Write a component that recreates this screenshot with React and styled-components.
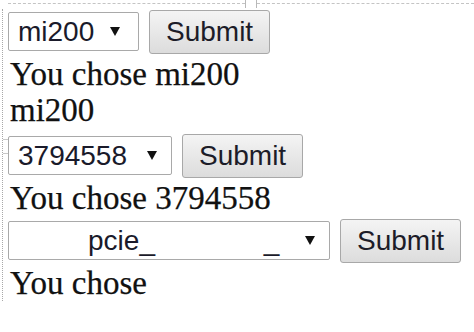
import { useState } from "react";
import styled, { createGlobalStyle } from "styled-components";

const GlobalStyle = createGlobalStyle`
  html, body {
    margin: 0;
    padding: 0;
    background: #fff;
  }
  body {
    font-family: "Liberation Serif", "Times New Roman", serif;
    color: #111;
  }
`;

const Page = styled.div`
  width: 474px;
  height: 332px;
  overflow: hidden;
`;

const TopFrame = styled.div`
  display: flex;
  height: 9px;
  padding-left: 8px;
`;

const DashedEdge = styled.div`
  flex: ${({ grow }) => (grow ? 1 : "none")};
  width: ${({ w }) => (w ? `${w}px` : "auto")};
  height: 3px;
  border-bottom: 1px dashed #c4c4c4;
`;

const FrameGap = styled.div`
  width: 10px;
  height: 8px;
  border-left: 1px solid #b8b8b8;
  border-right: 1px solid #b8b8b8;
`;

const Body = styled.div`
  display: flex;
  height: 292px;
`;

const SideRule = styled.div`
  width: 5px;
  margin-left: 2px;
  border-left: 1px dotted #a8a8a8;
  display: flex;
  flex-direction: column;
`;

const Stub = styled.div`
  height: 13px;
  margin-top: ${({ top }) => top}px;
  border-top: 1px solid #c8c8c8;
  border-bottom: 1px solid #c8c8c8;
`;

const Content = styled.div`
  display: flex;
  flex-direction: column;
`;

const Row = styled.div`
  display: flex;
  align-items: center;
  gap: 10px;
  height: 45px;
  margin-top: ${({ mt }) => mt || 0}px;
  margin-bottom: 2px;
`;

const SelectWrap = styled.div`
  position: relative;
  width: ${({ w }) => w}px;
  height: 39px;
`;

const Select = styled.select`
  appearance: none;
  -webkit-appearance: none;
  width: 100%;
  height: 100%;
  box-sizing: border-box;
  margin: 0;
  padding: 0 30px 0 9px;
  border: 1px solid #a9a9a9;
  border-radius: 2px;
  background: #fff;
  color: #1a1a2a;
  font-family: "Liberation Sans", Arial, sans-serif;
  font-size: 28px;
  outline: none;
`;

const Arrow = styled.svg`
  position: absolute;
  right: ${({ r }) => r}px;
  top: 15px;
  pointer-events: none;
`;

const Button = styled.button`
  height: 44px;
  box-sizing: border-box;
  padding: 0 16px;
  margin: 0;
  border: 1px solid #a8a8a8;
  border-radius: 3px;
  background: linear-gradient(#f4f4f4, #dcdcdc);
  color: #1c1c28;
  font-family: "Liberation Sans", Arial, sans-serif;
  font-size: 28px;
  cursor: pointer;
`;

const Line = styled.div`
  font-size: 33px;
  line-height: 36px;
  height: 36px;
  padding-left: 2px;
  white-space: nowrap;
  -webkit-text-stroke: 0.25px #111;
`;

const nb = (n) => "\u00a0".repeat(n);

const Picker = ({ width, arrowRight, value, options, onChange }) => (
  <SelectWrap w={width}>
    <Select value={value} onChange={(e) => onChange(e.target.value)}>
      {options.map((o) => (
        <option key={o} value={o}>
          {o}
        </option>
      ))}
    </Select>
    <Arrow r={arrowRight} width="10" height="9" viewBox="0 0 10 9">
      <path d="M0 0 H10 L5 9 Z" fill="#111" />
    </Arrow>
  </SelectWrap>
);

const App = () => {
  const [gpu, setGpu] = useState("mi200");
  const [job, setJob] = useState("3794558");
  const [bus, setBus] = useState(nb(9) + "pcie_" + nb(14) + "_");

  return (
    <Page>
      <GlobalStyle />
      <TopFrame>
        <DashedEdge w={237} />
        <FrameGap />
        <DashedEdge grow />
      </TopFrame>
      <Body>
        <SideRule>
          <Stub top={130} />
        </SideRule>
        <Content>
          <Row>
            <Picker
              width={131}
              arrowRight={19}
              value={gpu}
              options={["mi200", "mi100"]}
              onChange={setGpu}
            />
            <Button>Submit</Button>
          </Row>
          <Line>You chose {gpu}</Line>
          <Line>{gpu}</Line>
          <Row mt={5}>
            <Picker
              width={164}
              arrowRight={15}
              value={job}
              options={["3794558", "3794559"]}
              onChange={setJob}
            />
            <Button>Submit</Button>
          </Row>
          <Line>You chose {job}</Line>
          <Row mt={2}>
            <Picker
              width={322}
              arrowRight={15}
              value={bus}
              options={[bus]}
              onChange={setBus}
            />
            <Button>Submit</Button>
          </Row>
          <Line>You chose</Line>
        </Content>
      </Body>
    </Page>
  );
};

export default App;
